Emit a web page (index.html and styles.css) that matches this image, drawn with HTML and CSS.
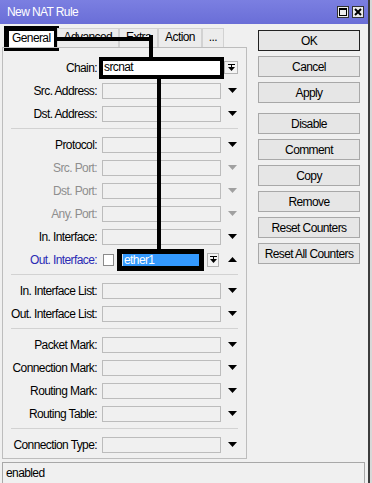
FILE: index.html
```html
<!DOCTYPE html>
<html lang="en">
<head>
    <meta charset="UTF-8">
    <meta name="viewport" content="width=device-width, initial-scale=1.0">
    <title>New NAT Rule</title>
    <link rel="stylesheet" href="styles.css">
</head>
<body>
    <div class="window">
        <div class="titlebar">
            <span class="title">New NAT Rule</span>
            <div class="title-btns">
                <span class="tbtn">
                    <svg width="8" height="8" viewBox="0 0 8 8"><rect x="0.5" y="0.5" width="7" height="7" fill="none" stroke="#000"/><rect x="0" y="0" width="8" height="2" fill="#000"/></svg>
                </span>
                <span class="tbtn">
                    <svg width="8" height="8" viewBox="0 0 8 8"><path d="M1 1 L7 7 M7 1 L1 7" stroke="#000" stroke-width="2"/></svg>
                </span>
            </div>
        </div>

        <div class="main">
            <div class="left">
                <div class="tabs">
                    <span class="tab active">General</span>
                    <span class="tab">Advanced</span>
                    <span class="tab">Extra</span>
                    <span class="tab">Action</span>
                    <span class="tab">...</span>
                </div>

                <div class="panel">
                    <!-- chain / addresses -->
                    <div class="row">
                        <span class="lbl">Chain:</span>
                        <div class="ctl"><div class="field chain">srcnat</div></div>
                        <div class="arr">
                            <span class="dbtn chain-btn">
                                <svg width="7" height="8" viewBox="0 0 7 8"><rect x="0" y="0" width="7" height="1" fill="#000"/><rect x="3" y="1" width="1" height="3" fill="#000"/><polygon points="0,3 7,3 3.5,7" fill="#000"/></svg>
                            </span>
                        </div>
                    </div>
                    <div class="row">
                        <span class="lbl">Src. Address:</span>
                        <div class="ctl"><div class="field"></div></div>
                        <div class="arr"><svg class="tri" width="9" height="5" viewBox="0 0 9 5"><polygon points="0,0 9,0 4.5,5"/></svg></div>
                    </div>
                    <div class="row">
                        <span class="lbl">Dst. Address:</span>
                        <div class="ctl"><div class="field"></div></div>
                        <div class="arr"><svg class="tri" width="9" height="5" viewBox="0 0 9 5"><polygon points="0,0 9,0 4.5,5"/></svg></div>
                    </div>

                    <div class="sep"></div>

                    <!-- protocol / ports / interfaces -->
                    <div class="row">
                        <span class="lbl">Protocol:</span>
                        <div class="ctl"><div class="field"></div></div>
                        <div class="arr"><svg class="tri" width="9" height="5" viewBox="0 0 9 5"><polygon points="0,0 9,0 4.5,5"/></svg></div>
                    </div>
                    <div class="row">
                        <span class="lbl dim">Src. Port:</span>
                        <div class="ctl"><div class="field"></div></div>
                        <div class="arr"><svg class="tri dim" width="9" height="5" viewBox="0 0 9 5"><polygon points="0,0 9,0 4.5,5"/></svg></div>
                    </div>
                    <div class="row">
                        <span class="lbl dim">Dst. Port:</span>
                        <div class="ctl"><div class="field"></div></div>
                        <div class="arr"><svg class="tri dim" width="9" height="5" viewBox="0 0 9 5"><polygon points="0,0 9,0 4.5,5"/></svg></div>
                    </div>
                    <div class="row">
                        <span class="lbl dim">Any. Port:</span>
                        <div class="ctl"><div class="field"></div></div>
                        <div class="arr"><svg class="tri dim" width="9" height="5" viewBox="0 0 9 5"><polygon points="0,0 9,0 4.5,5"/></svg></div>
                    </div>
                    <div class="row">
                        <span class="lbl">In. Interface:</span>
                        <div class="ctl"><div class="field"></div></div>
                        <div class="arr"><svg class="tri" width="9" height="5" viewBox="0 0 9 5"><polygon points="0,0 9,0 4.5,5"/></svg></div>
                    </div>
                    <div class="row">
                        <span class="lbl blue">Out. Interface:</span>
                        <div class="ctl">
                            <span class="check"></span>
                            <span class="annot-box"><span class="sel">ether1</span></span>
                            <span class="dbtn">
                                <svg width="7" height="8" viewBox="0 0 7 8"><rect x="0" y="0" width="7" height="1" fill="#000"/><rect x="3" y="1" width="1" height="3" fill="#000"/><polygon points="0,3 7,3 3.5,7" fill="#000"/></svg>
                            </span>
                        </div>
                        <div class="arr"><svg class="tri" width="9" height="5" viewBox="0 0 9 5"><polygon points="0,5 9,5 4.5,0"/></svg></div>
                    </div>

                    <div class="sep"></div>

                    <div class="row">
                        <span class="lbl">In. Interface List:</span>
                        <div class="ctl"><div class="field"></div></div>
                        <div class="arr"><svg class="tri" width="9" height="5" viewBox="0 0 9 5"><polygon points="0,0 9,0 4.5,5"/></svg></div>
                    </div>
                    <div class="row">
                        <span class="lbl">Out. Interface List:</span>
                        <div class="ctl"><div class="field"></div></div>
                        <div class="arr"><svg class="tri" width="9" height="5" viewBox="0 0 9 5"><polygon points="0,0 9,0 4.5,5"/></svg></div>
                    </div>

                    <div class="sep"></div>

                    <!-- marks -->
                    <div class="row">
                        <span class="lbl">Packet Mark:</span>
                        <div class="ctl"><div class="field"></div></div>
                        <div class="arr"><svg class="tri" width="9" height="5" viewBox="0 0 9 5"><polygon points="0,0 9,0 4.5,5"/></svg></div>
                    </div>
                    <div class="row">
                        <span class="lbl">Connection Mark:</span>
                        <div class="ctl"><div class="field"></div></div>
                        <div class="arr"><svg class="tri" width="9" height="5" viewBox="0 0 9 5"><polygon points="0,0 9,0 4.5,5"/></svg></div>
                    </div>
                    <div class="row">
                        <span class="lbl">Routing Mark:</span>
                        <div class="ctl"><div class="field"></div></div>
                        <div class="arr"><svg class="tri" width="9" height="5" viewBox="0 0 9 5"><polygon points="0,0 9,0 4.5,5"/></svg></div>
                    </div>
                    <div class="row">
                        <span class="lbl">Routing Table:</span>
                        <div class="ctl"><div class="field"></div></div>
                        <div class="arr"><svg class="tri" width="9" height="5" viewBox="0 0 9 5"><polygon points="0,0 9,0 4.5,5"/></svg></div>
                    </div>

                    <div class="sep"></div>

                    <div class="row">
                        <span class="lbl">Connection Type:</span>
                        <div class="ctl"><div class="field"></div></div>
                        <div class="arr"><svg class="tri" width="9" height="5" viewBox="0 0 9 5"><polygon points="0,0 9,0 4.5,5"/></svg></div>
                    </div>
                </div>
            </div>

            <div class="buttons">
                <button class="default">OK</button>
                <button>Cancel</button>
                <button>Apply</button>
                <button class="spaced">Disable</button>
                <button>Comment</button>
                <button>Copy</button>
                <button>Remove</button>
                <button>Reset Counters</button>
                <button>Reset All Counters</button>
            </div>
        </div>

        <div class="status">enabled</div>

        <!-- annotation lines drawn over the dialog -->
        <div class="mark m1"></div>
        <div class="mark m2"></div>
        <div class="mark m3"></div>
    </div>
</body>
</html>
```

FILE: styles.css
```css
* {
    box-sizing: border-box;
}
body {
    margin: 0;
    font-family: "Liberation Sans", Arial, sans-serif;
    font-size: 12px;
    letter-spacing: -0.6px;
    background-color: #d8d8d8;
    color: #000;
}
.window {
    position: relative;
    width: 370px;
    height: 483px;
    background: #f0f0f0;
    border-right: 2px solid #3c3c3c;
    display: flex;
    flex-direction: column;
    overflow: hidden;
}

/* Title bar */
.titlebar {
    height: 24px;
    flex: none;
    display: flex;
    align-items: center;
    padding: 0 4px 1px 7px;
    background: linear-gradient(#7b7fe1, #6a6ed7);
    color: #fff;
}
.title {
    flex: 1;
}
.title-btns {
    display: flex;
    gap: 3px;
}
.tbtn {
    width: 12px;
    height: 12px;
    display: flex;
    align-items: center;
    justify-content: center;
    background: #ececec;
    border: 1px solid #333;
}

/* Main area */
.main {
    height: 435px;
    flex: none;
    display: flex;
}
.left {
    width: 247px;
    padding-left: 2px;
    display: flex;
    flex-direction: column;
}

/* Tabs */
.tabs {
    height: 23px;
    flex: none;
    display: flex;
    align-items: flex-end;
    padding-left: 6px;
}
.tab {
    height: 19px;
    line-height: 17px;
    padding: 0 6px;
    border: 1px solid #d2d2d2;
    border-bottom: none;
    background: #ececec;
}
.tab.active {
    height: 17px;
    line-height: 15px;
    padding: 0 3px;
    margin-right: 2px;
    background: #fff;
    border-color: #000;
    outline: 4px solid #000;
}

/* Form panel */
.panel {
    flex: 1;
    border: 1px solid #bdbdbd;
    padding: 8px 0 2px 0;
}
.row {
    height: 23px;
    display: flex;
    align-items: center;
}
.lbl {
    width: 94px;
    text-align: right;
    white-space: nowrap;
}
.lbl.dim {
    color: #8e8e8e;
}
.lbl.blue {
    color: #2a2ab4;
}
.ctl {
    width: 119px;
    margin-left: 5px;
    display: flex;
    align-items: center;
}
.field {
    width: 100%;
    height: 16px;
    border: 1px solid #bcbcbc;
    background: #f0f0f0;
}
.field.chain {
    background: #fff;
    border-color: #000;
    outline: 3px solid #000;
    padding-left: 1px;
    line-height: 13px;
}
.arr {
    flex: 1;
    display: flex;
    align-items: center;
    padding-left: 7px;
}
.tri {
    fill: #000;
}
.tri.dim {
    fill: #a0a0a0;
}
.dbtn {
    width: 12px;
    height: 14px;
    display: flex;
    align-items: center;
    justify-content: center;
    border: 1px solid #b4b4b4;
    background: #f4f4f4;
}
.dbtn.chain-btn {
    width: 14px;
    height: 13px;
    margin-left: -4px;
}
.check {
    width: 11px;
    height: 12px;
    margin-left: 1px;
    background: #fff;
    border: 1px solid #8a8a8a;
}
.annot-box {
    width: 87px;
    height: 22px;
    margin: 0 3px;
    border: 5px solid #000;
    background: #3399ff;
    display: flex;
    align-items: center;
}
.sel {
    color: #fff;
    padding-left: 1px;
    border-left: 1px solid #cde;
    line-height: 12px;
}
.sep {
    height: 8px;
    padding-top: 3px;
}
.sep:before {
    content: "";
    display: block;
    margin: 0 8px;
    border-top: 1px solid #d2d2d2;
}

/* Buttons column */
.buttons {
    width: 102px;
    margin-left: 11px;
    padding-top: 6px;
    display: flex;
    flex-direction: column;
    gap: 5px;
}
button {
    height: 21px;
    padding: 0;
    font-family: inherit;
    font-size: 12px;
    letter-spacing: -0.6px;
    color: #000;
    background: #e6e6e6;
    border: 1px solid #a8a8a8;
}
button.default {
    border-color: #222;
}
button.spaced {
    margin-top: 5px;
}

/* Status bar */
.status {
    flex: 1;
    margin: 3px 3px 0 2px;
    padding: 1px 0 0 3px;
    line-height: 18px;
    border: 1px solid #a8a8a8;
    border-bottom: none;
    background: #f0f0f0;
}

/* Annotation overlay */
.mark {
    position: absolute;
    background: #000;
}
.m1 {
    left: 57px;
    top: 37px;
    width: 96px;
    height: 4px;
}
.m2 {
    left: 149px;
    top: 35px;
    width: 4px;
    height: 22px;
}
.m3 {
    left: 157px;
    top: 77px;
    width: 4px;
    height: 172px;
}
```
